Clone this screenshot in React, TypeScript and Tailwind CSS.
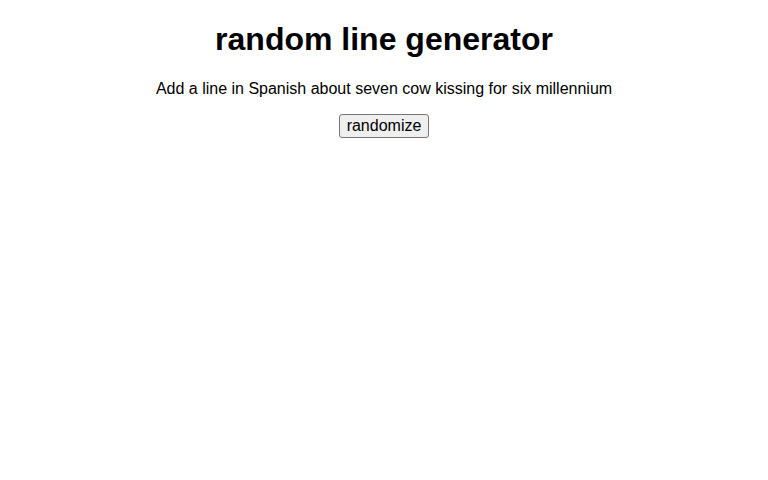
export default function App() {
  return (
    <div className="min-h-screen bg-white text-center font-['Liberation_Sans',Arial,sans-serif] text-black">
      <h1 className="my-[21.44px] text-[32px] font-bold leading-[normal]">random line generator</h1>
      <p className="my-4 text-base leading-[normal]">
        Add a line in Spanish about seven cow kissing for six millennium
      </p>
      <button
        type="button"
        className="rounded-[3px] border border-[#767676] bg-[#efefef] px-[7px] py-[2px] text-base leading-[normal]"
      >
        randomize
      </button>
    </div>
  );
}
